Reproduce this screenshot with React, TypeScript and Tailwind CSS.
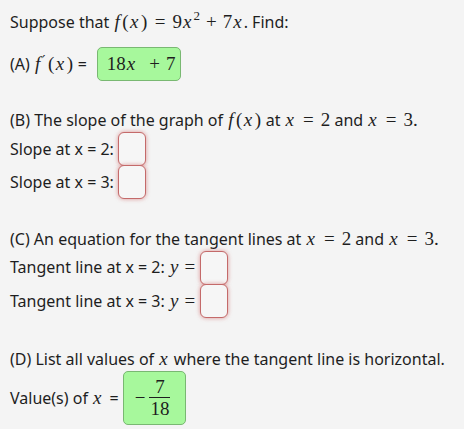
import type { ReactNode } from 'react'

const mathFont = "font-['Liberation_Serif',serif]"

// italic math letter, padded to Computer Modern-ish widths
function M({ children }: { children: ReactNode }) {
  return <span className={`${mathFont} text-[19px] italic ml-[1px] mr-[2px]`}>{children}</span>
}

function N({ children }: { children: ReactNode }) {
  return <span className={`${mathFont} text-[19px] not-italic`}>{children}</span>
}

function P({ children }: { children: ReactNode }) {
  return <span className={`${mathFont} text-[19px] not-italic mx-[0.5px]`}>{children}</span>
}

// relation (=) and binary (+) operators with KaTeX-like spacing
function Rel({ className = 'mx-[7px]' }: { className?: string }) {
  return <span className={`${mathFont} text-[19px] ${className}`}>=</span>
}

function Bin() {
  return <span className={`${mathFont} text-[19px] mx-[6px]`}>+</span>
}

function EmptyBox() {
  return (
    <span className="inline-block w-[28px] h-[34px] -my-px rounded-[6px] border border-[#c46a6a] bg-[#f6f6f6] shadow-[0_0_4px_rgba(200,70,70,0.55)]" />
  )
}

function Answer({ children, className = '' }: { children: ReactNode; className?: string }) {
  return (
    <span
      className={`inline-flex items-center rounded-[5px] border border-[#79b872] bg-[#a7f89c] ${className}`}
    >
      {children}
    </span>
  )
}

function Fx() {
  return (
    <>
      <M>f</M>
      <P>(</P>
      <M>x</M>
      <P>)</P>
    </>
  )
}

export default function App() {
  return (
    <div className="min-h-screen w-full bg-[#f4f4f4] text-[#1e1e1e] font-['Noto_Sans',sans-serif] text-[16px] pl-[10px]">
      <div className="pt-[4px] h-[28px] leading-[24px] whitespace-nowrap">
        Suppose that <Fx />
        <Rel />
        <N>9</N>
        <M>x</M>
        <span className={`${mathFont} text-[13px] align-[8px]`}>2</span>
        <Bin />
        <N>7</N>
        <M>x</M>. Find:
      </div>

      <div className="mt-[19px] h-[34px] flex items-center whitespace-nowrap">
        <span>
          (A) <M>f</M>
          <span className="font-['DejaVu_Sans',sans-serif] text-[14px] align-[5px] mr-[2px]">′</span>
          <P>(</P>
          <M>x</M>
          <P>)</P> =
        </span>
        <Answer className="ml-[10px] w-[84px] h-[34px] pl-[9px]">
          <N>18</N>
          <M>x</M>
          <span className="w-[6px]" />
          <Bin />
          <N>7</N>
        </Answer>
      </div>

      <div className="mt-[27px] h-[24px] leading-[24px] whitespace-nowrap">
        (B) The slope of the graph of <Fx /> at <M>x</M>
        <Rel />
        <N>2</N> and <M>x</M>
        <Rel />
        <N>3.</N>
      </div>
      <div className="h-[33px] flex items-center">
        <span>Slope at x = 2:&nbsp;</span>
        <EmptyBox />
      </div>
      <div className="h-[34px] flex items-center">
        <span>Slope at x = 3:&nbsp;</span>
        <EmptyBox />
      </div>

      <div className="mt-[28px] h-[24px] leading-[24px] whitespace-nowrap">
        (C) An equation for the tangent lines at <M>x</M>
        <Rel />
        <N>2</N> and <M>x</M>
        <Rel />
        <N>3.</N>
      </div>
      <div className="h-[33px] flex items-center whitespace-nowrap">
        <span>
          Tangent line at x = 2: <M>y</M>
          <Rel className="ml-[4px] mr-[5px]" />
        </span>
        <EmptyBox />
      </div>
      <div className="h-[34px] flex items-center whitespace-nowrap">
        <span>
          Tangent line at x = 3: <M>y</M>
          <Rel className="ml-[4px] mr-[5px]" />
        </span>
        <EmptyBox />
      </div>

      <div className="mt-[29px] h-[24px] leading-[24px] whitespace-nowrap">
        (D) List all values of <M>x</M> where the tangent line is horizontal.
      </div>
      <div className="h-[54px] flex items-center whitespace-nowrap">
        <span>
          Value(s) of&nbsp;
          <M>x</M>
          <span className="ml-[6px]">=</span>
        </span>
        <Answer className="ml-[4px] w-[63px] h-[54px] pl-[11px]">
          <N>−</N>
          <span className="ml-[4px] inline-flex flex-col items-center">
            <span className={`${mathFont} text-[19px] leading-[20px]`}>7</span>
            <span className="w-[21px] h-px bg-[#1e1e1e]" />
            <span className={`${mathFont} text-[19px] leading-[21px]`}>18</span>
          </span>
        </Answer>
      </div>
    </div>
  )
}
